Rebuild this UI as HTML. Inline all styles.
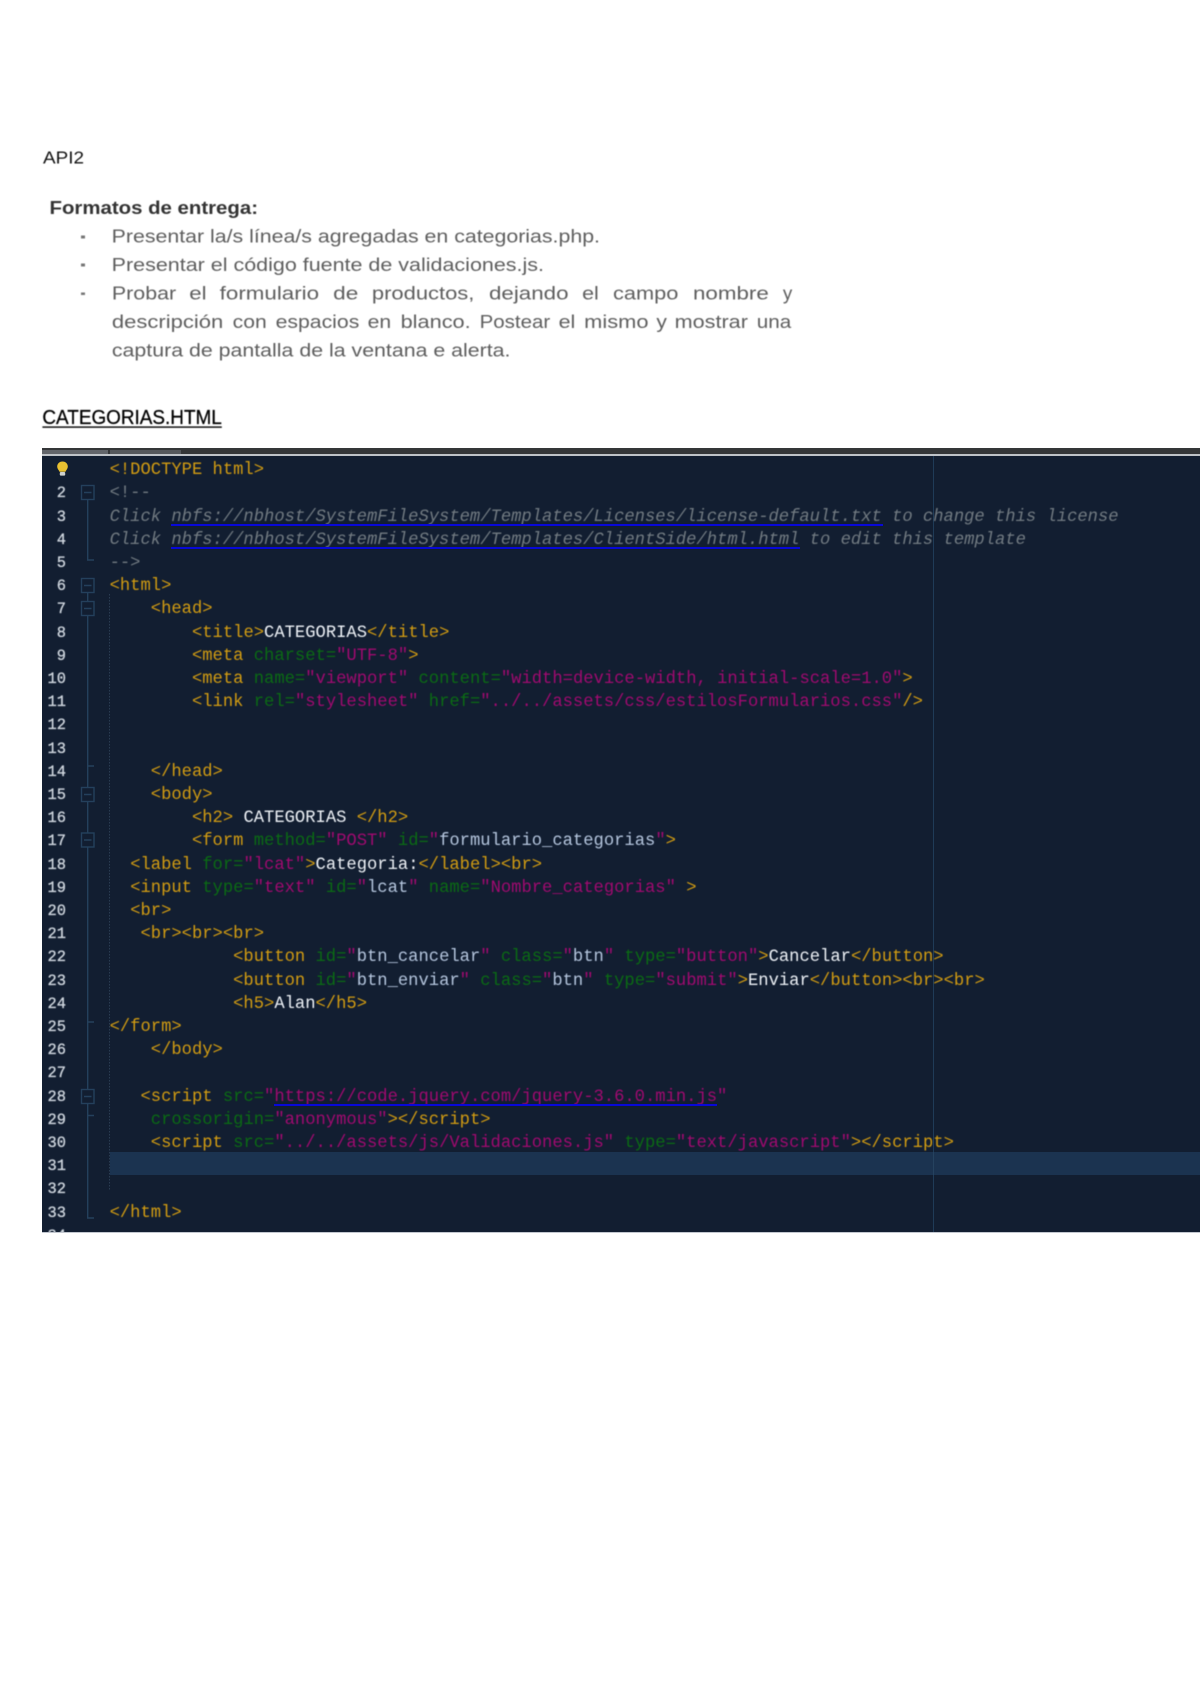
<!DOCTYPE html>
<html lang="es">
<head>
<meta charset="utf-8">
<title>API2</title>
<style>
html,body{margin:0;padding:0;background:#fff;}
body{position:relative;width:1200px;height:1696px;overflow:hidden;}
.abs{position:absolute;}
#doc{position:absolute;left:0;top:0;width:1200px;height:450px;font-family:"Liberation Sans",sans-serif;}
#editor{position:absolute;left:42px;top:456px;width:1158px;height:776.5px;background:#121e31;overflow:hidden;}
pre{margin:0;position:absolute;font-family:"Liberation Mono",monospace;line-height:23.2px;white-space:pre;filter:blur(.55px);}
#code{left:109.6px;top:459.2px;font-size:17.16px;color:#fff;}
#nums{left:40px;top:459.2px;width:26px;text-align:right;font-size:15.4px;color:#cfd6de;-webkit-text-stroke:.3px #cfd6de;}
#clip{position:absolute;left:0;top:456px;width:1200px;height:776.5px;overflow:hidden;}
#clip pre{margin-top:-456px;}
.t{color:#d29c12}.a{color:#0b6b14}.v{color:#a00a70}.i{color:#b5c6de}.x{color:#eef2f7}.c{color:#727b82;font-style:italic}.g{color:#727b82}
</style>
</head>
<body>
<svg id="doc" width="1200" height="450" viewBox="0 0 1200 450" style="filter:blur(.55px)">
<text x="43" y="163.6" font-size="17.5" fill="#111" textLength="41" lengthAdjust="spacingAndGlyphs">API2</text>
<text x="49.5" y="214" font-size="18.5" font-weight="bold" fill="#333" textLength="208.5" lengthAdjust="spacingAndGlyphs">Formatos de entrega:</text>
<g fill="#777"><rect x="81" y="235.5" width="4" height="3"/><rect x="81" y="263.5" width="4" height="3"/><rect x="81" y="292.5" width="4" height="2.5"/></g>
<g font-size="18.5" fill="#5e5e5e" lengthAdjust="spacingAndGlyphs">
<text x="111.7" y="242.7" textLength="488.3" lengthAdjust="spacingAndGlyphs">Presentar la/s línea/s agregadas en categorias.php.</text>
<text x="111.7" y="271" textLength="432.3" lengthAdjust="spacingAndGlyphs">Presentar el código fuente de validaciones.js.</text>
<text x="111.9" y="299.6" textLength="64.3" lengthAdjust="spacingAndGlyphs">Probar</text>
<text x="189.3" y="299.6" textLength="17.3" lengthAdjust="spacingAndGlyphs">el</text>
<text x="219.7" y="299.6" textLength="99.4" lengthAdjust="spacingAndGlyphs">formulario</text>
<text x="333.2" y="299.6" textLength="25.1" lengthAdjust="spacingAndGlyphs">de</text>
<text x="371.9" y="299.6" textLength="102.5" lengthAdjust="spacingAndGlyphs">productos,</text>
<text x="489" y="299.6" textLength="79.5" lengthAdjust="spacingAndGlyphs">dejando</text>
<text x="582.1" y="299.6" textLength="16.7" lengthAdjust="spacingAndGlyphs">el</text>
<text x="613" y="299.6" textLength="65.4" lengthAdjust="spacingAndGlyphs">campo</text>
<text x="693" y="299.6" textLength="75.8" lengthAdjust="spacingAndGlyphs">nombre</text>
<text x="782.9" y="299.6" textLength="9.4" lengthAdjust="spacingAndGlyphs">y</text>
<text x="111.9" y="328" textLength="111.4" lengthAdjust="spacingAndGlyphs">descripción</text>
<text x="232.7" y="328" textLength="34" lengthAdjust="spacingAndGlyphs">con</text>
<text x="275.6" y="328" textLength="83.7" lengthAdjust="spacingAndGlyphs">espacios</text>
<text x="367.7" y="328" textLength="23.5" lengthAdjust="spacingAndGlyphs">en</text>
<text x="400.6" y="328" textLength="70.1" lengthAdjust="spacingAndGlyphs">blanco.</text>
<text x="479.6" y="328" textLength="70.6" lengthAdjust="spacingAndGlyphs">Postear</text>
<text x="558.6" y="328" textLength="16.7" lengthAdjust="spacingAndGlyphs">el</text>
<text x="584.2" y="328" textLength="64.3" lengthAdjust="spacingAndGlyphs">mismo</text>
<text x="656.4" y="328" textLength="10.5" lengthAdjust="spacingAndGlyphs">y</text>
<text x="674.7" y="328" textLength="73.2" lengthAdjust="spacingAndGlyphs">mostrar</text>
<text x="756.8" y="328" textLength="34.5" lengthAdjust="spacingAndGlyphs">una</text>
<text x="111.9" y="356.5" textLength="398.6" lengthAdjust="spacingAndGlyphs">captura de pantalla de la ventana e alerta.</text>
</g>
<text x="42.4" y="424" font-size="20" fill="#000" stroke="#000" stroke-width=".25" textLength="179.4" lengthAdjust="spacingAndGlyphs">CATEGORIAS.HTML</text>
<rect x="42.4" y="426.4" width="179.4" height="1.4" fill="#000"/>
</svg>

<!-- top bar -->
<div class="abs" style="left:42px;top:448px;width:1158px;height:8px;background:#343638;"></div>
<div class="abs" style="left:42px;top:449.5px;width:66px;height:4px;background:#62656a;"></div>
<div class="abs" style="left:110px;top:449.5px;width:71px;height:4px;background:#55585c;"></div>
<div class="abs" style="left:42px;top:453.6px;width:1158px;height:2px;background:#bfc3c8;"></div>

<div id="editor"></div>
<div class="abs" style="left:933px;top:456px;width:1.4px;height:776.5px;background:#1f3b57;"></div>

<!-- gutter -->
<svg class="abs" style="left:0;top:0;filter:blur(.35px)" width="120" height="1240" viewBox="0 0 120 1240">
<g fill="none" stroke="#24405c" stroke-width="1.4">
<path d="M87.7 499V560H94"/>
<path d="M87.7 592V1218H94"/>
<path d="M87.7 766H94M87.7 1022H94M87.7 1115.5H94"/>
<rect x="81.5" y="485.5" width="12.5" height="14" fill="#121e31"/>
<rect x="81.5" y="578.5" width="12.5" height="14" fill="#121e31"/>
<rect x="81.5" y="601.5" width="12.5" height="14" fill="#121e31"/>
<rect x="81.5" y="787.5" width="12.5" height="14" fill="#121e31"/>
<rect x="81.5" y="833" width="12.5" height="14" fill="#121e31"/>
<rect x="81.5" y="1089.5" width="12.5" height="14" fill="#121e31"/>
<path d="M84 492.5h7.5M84 585.5h7.5M84 608.5h7.5M84 794.5h7.5M84 840h7.5M84 1096.5h7.5"/>
</g>
<g stroke="#2a3c52" stroke-width="1" stroke-dasharray="1.5 1.5">
<path d="M109.5 594V1190"/>
<path d="M192 942V1012"/>
</g>
<path d="M62.5 461.5c-3.2 0-5.3 2.3-5.3 5 0 2.2 1.5 3.4 2.3 5.2h6c.8-1.8 2.3-3 2.3-5.2 0-2.7-2.1-5-5.3-5z" fill="#e8c031"/>
<rect x="59.8" y="472" width="5.4" height="3.6" rx="1" fill="#cfd2cf"/>
</svg>

<div id="clip">
<pre id="nums"> 
2
3
4
5
6
7
8
9
10
11
12
13
14
15
16
17
18
19
20
21
22
23
24
25
26
27
28
29
30
31
32
33
34</pre>
<pre id="code"><span class="t">&lt;!DOCTYPE html&gt;</span>
<span class="g">&lt;!--</span>
<span class="c">Click nbfs://nbhost/SystemFileSystem/Templates/Licenses/license-default.txt to change this license</span>
<span class="c">Click nbfs://nbhost/SystemFileSystem/Templates/ClientSide/html.html to edit this template</span>
<span class="g">--&gt;</span>
<span class="t">&lt;html&gt;</span>
    <span class="t">&lt;head&gt;</span>
        <span class="t">&lt;title&gt;</span><span class="x">CATEGORIAS</span><span class="t">&lt;/title&gt;</span>
        <span class="t">&lt;meta</span> <span class="a">charset=</span><span class="v">"UTF-8"</span><span class="t">&gt;</span>
        <span class="t">&lt;meta</span> <span class="a">name=</span><span class="v">"viewport"</span> <span class="a">content=</span><span class="v">"width=device-width, initial-scale=1.0"</span><span class="t">&gt;</span>
        <span class="t">&lt;link</span> <span class="a">rel=</span><span class="v">"stylesheet"</span> <span class="a">href=</span><span class="v">"../../assets/css/estilosFormularios.css"</span><span class="t">/&gt;</span>


    <span class="t">&lt;/head&gt;</span>
    <span class="t">&lt;body&gt;</span>
        <span class="t">&lt;h2&gt;</span><span class="x"> CATEGORIAS </span><span class="t">&lt;/h2&gt;</span>
        <span class="t">&lt;form</span> <span class="a">method=</span><span class="v">"POST"</span> <span class="a">id=</span><span class="v">"</span><span class="i">formulario_categorias</span><span class="v">"</span><span class="t">&gt;</span>
  <span class="t">&lt;label</span> <span class="a">for=</span><span class="v">"lcat"</span><span class="t">&gt;</span><span class="x">Categoria:</span><span class="t">&lt;/label&gt;&lt;br&gt;</span>
  <span class="t">&lt;input</span> <span class="a">type=</span><span class="v">"text"</span> <span class="a">id=</span><span class="v">"</span><span class="i">lcat</span><span class="v">"</span> <span class="a">name=</span><span class="v">"Nombre_categorias"</span> <span class="t">&gt;</span>
  <span class="t">&lt;br&gt;</span>
   <span class="t">&lt;br&gt;&lt;br&gt;&lt;br&gt;</span>
            <span class="t">&lt;button</span> <span class="a">id=</span><span class="v">"</span><span class="i">btn_cancelar</span><span class="v">"</span> <span class="a">class=</span><span class="v">"</span><span class="i">btn</span><span class="v">"</span> <span class="a">type=</span><span class="v">"button"</span><span class="t">&gt;</span><span class="x">Cancelar</span><span class="t">&lt;/button&gt;</span>
            <span class="t">&lt;button</span> <span class="a">id=</span><span class="v">"</span><span class="i">btn_enviar</span><span class="v">"</span> <span class="a">class=</span><span class="v">"</span><span class="i">btn</span><span class="v">"</span> <span class="a">type=</span><span class="v">"submit"</span><span class="t">&gt;</span><span class="x">Enviar</span><span class="t">&lt;/button&gt;&lt;br&gt;&lt;br&gt;</span>
            <span class="t">&lt;h5&gt;</span><span class="x">Alan</span><span class="t">&lt;/h5&gt;</span>
<span class="t">&lt;/form&gt;</span>
    <span class="t">&lt;/body&gt;</span>

   <span class="t">&lt;script</span> <span class="a">src=</span><span class="v">"https://code.jquery.com/jquery-3.6.0.min.js"</span>
    <span class="a">crossorigin=</span><span class="v">"anonymous"</span><span class="t">&gt;&lt;/script&gt;</span>
    <span class="t">&lt;script</span> <span class="a">src=</span><span class="v">"../../assets/js/Validaciones.js"</span> <span class="a">type=</span><span class="v">"text/javascript"</span><span class="t">&gt;&lt;/script&gt;</span>


<span class="t">&lt;/html&gt;</span></pre>
</div>
<div class="abs" style="left:109.5px;top:1152px;width:1090.5px;height:23px;background:#1b3350;"></div>
<div class="abs" style="left:933px;top:1152px;width:1.4px;height:23px;background:#25425f;"></div>
<div class="abs" style="left:171px;top:523.5px;width:711.5px;height:2px;background:#0808d8;"></div>
<div class="abs" style="left:171px;top:546.7px;width:628.5px;height:2px;background:#0808d8;"></div>
<div class="abs" style="left:274px;top:1103.5px;width:443px;height:2px;background:#0808d8;"></div>
<div class="abs" style="left:42px;top:1232px;width:1158px;height:1.2px;background:#c2c7cf;"></div>
</body>
</html>
